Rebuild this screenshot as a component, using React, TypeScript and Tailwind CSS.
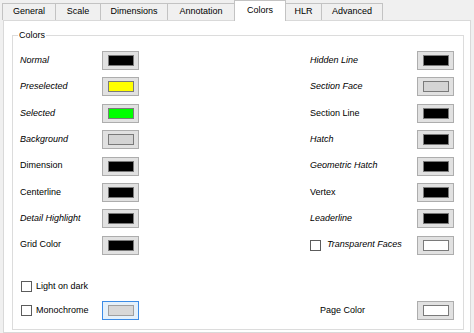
import React from "react";

type Row = {
  label: string;
  italic?: boolean;
  swatch: string;
  check?: boolean;
};

const leftRows: Row[] = [
  { label: "Normal", italic: true, swatch: "bg-black" },
  { label: "Preselected", italic: true, swatch: "bg-[#ffff00]" },
  { label: "Selected", italic: true, swatch: "bg-[#00ff00]" },
  { label: "Background", italic: true, swatch: "bg-[#d4d4d4]" },
  { label: "Dimension", swatch: "bg-black" },
  { label: "Centerline", swatch: "bg-black" },
  { label: "Detail Highlight", italic: true, swatch: "bg-black" },
  { label: "Grid Color", swatch: "bg-black" },
];

const rightRows: Row[] = [
  { label: "Hidden Line", italic: true, swatch: "bg-black" },
  { label: "Section Face", italic: true, swatch: "bg-[#d4d4d4]" },
  { label: "Section Line", swatch: "bg-black" },
  { label: "Hatch", italic: true, swatch: "bg-black" },
  { label: "Geometric Hatch", italic: true, swatch: "bg-black" },
  { label: "Vertex", swatch: "bg-black" },
  { label: "Leaderline", italic: true, swatch: "bg-black" },
  { label: "Transparent Faces", italic: true, swatch: "bg-white", check: true },
];

const tabs = [
  { name: "General", w: "w-[54px]" },
  { name: "Scale", w: "w-[46px]" },
  { name: "Dimensions", w: "w-[68px]" },
  { name: "Annotation", w: "w-[68px]" },
  { name: "Colors", w: "w-[52px]", active: true },
  { name: "HLR", w: "w-[37px]" },
  { name: "Advanced", w: "w-[62px]" },
];

function ColorButton({ swatch, focused }: { swatch: string; focused?: boolean }) {
  return (
    <div
      className={`flex h-[19px] w-[37px] shrink-0 items-center justify-center border ${
        focused ? "border-[#3c8ce6] bg-[#e5f1fb]" : "border-[#adadad] bg-[#e1e1e1]"
      }`}
    >
      <div className={`h-[11px] w-[26px] border border-[#7a7a7a] ${swatch}`} />
    </div>
  );
}

function Check() {
  return <div className="h-[11px] w-[11px] shrink-0 border border-[#5c5c5c] bg-white" />;
}

function ColorRow({ row }: { row: Row }) {
  return (
    <div className="flex h-[26.4px] items-center justify-between">
      <div className="flex items-center gap-[6px]">
        {row.check && <Check />}
        <span className={row.italic ? "italic" : ""}>{row.label}</span>
      </div>
      <ColorButton swatch={row.swatch} />
    </div>
  );
}

export default function App() {
  return (
    <div className="h-[333px] w-[474px] overflow-hidden bg-[#f0f0f0] font-['Liberation_Sans',Arial,sans-serif] text-[9px] text-black">
      {/* Tab strip */}
      <div className="flex h-[20px] items-end pl-[2px]">
        {tabs.map((t) =>
          t.active ? (
            <div
              key={t.name}
              className={`relative z-10 -mb-px -ml-px flex h-[21px] items-center justify-center border border-b-0 border-[#c3c3c3] bg-white ${t.w}`}
            >
              {t.name}
            </div>
          ) : (
            <div
              key={t.name}
              className={`-ml-px flex h-[17px] items-center justify-center border border-b-0 border-[#c3c3c3] bg-[#f0f0f0] first:ml-0 ${t.w}`}
            >
              {t.name}
            </div>
          )
        )}
      </div>

      {/* Tab page */}
      <div className="ml-[3px] h-[313px] w-[468px] border border-[#d9d9d9] bg-white">
        <div className="relative ml-[8px] mt-[14px] h-[295px] w-[452px] border border-[#dcdcdc]">
          <span className="absolute left-[5px] top-[-7px] bg-white px-[1px] leading-[12px]">Colors</span>

          <div className="flex pl-[7px] pr-[9px] pt-[11.3px]">
            <div className="flex w-[119px] flex-col">
              {leftRows.map((r) => (
                <ColorRow key={r.label} row={r} />
              ))}
            </div>
            <div className="ml-auto flex w-[144px] flex-col">
              {rightRows.map((r) => (
                <ColorRow key={r.label} row={r} />
              ))}
            </div>
          </div>

          <div className="mt-[16px] flex flex-col pl-[8px] pr-[9px]">
            <div className="flex h-[24px] items-center gap-[4px]">
              <Check />
              <span>Light on dark</span>
            </div>
            <div className="flex h-[24px] items-center">
              <div className="flex w-[118px] items-center justify-between">
                <div className="flex items-center gap-[4px]">
                  <Check />
                  <span>Monochrome</span>
                </div>
                <ColorButton swatch="bg-[#d8d8d8] border-[#a0a0a0]" focused />
              </div>
              <div className="ml-auto flex w-[134px] items-center justify-between">
                <span>Page Color</span>
                <ColorButton swatch="bg-white" />
              </div>
            </div>
          </div>
        </div>
      </div>
    </div>
  );
}
